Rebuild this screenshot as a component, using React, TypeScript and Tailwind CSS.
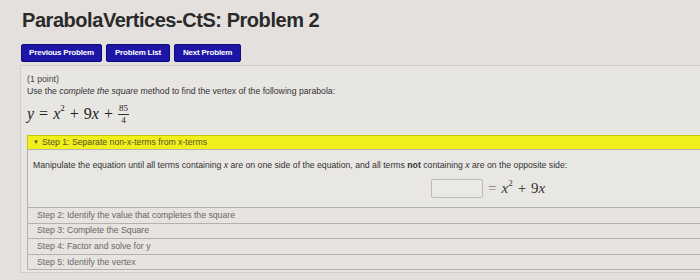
import React from "react";

const sans = { fontFamily: '"Liberation Sans", Arial, sans-serif' };
const serif = { fontFamily: '"Liberation Serif", "Times New Roman", serif' };

function Btn({ label, w }: { label: string; w: string }) {
  return (
    <div
      className={`h-[18px] ${w} flex items-center justify-center rounded-[2px] border border-[#0e0a7a] bg-[#1d15a6] text-[8px] font-bold tracking-[-0.2px] text-white`}
    >
      {label}
    </div>
  );
}

function StepRow({ label }: { label: string }) {
  return (
    <div className="h-[16.6px] -mt-px flex items-center border border-[#b3b0ad] bg-[#e6e3e0] pl-[9px] text-[8.7px] text-[#6a6866]">
      {label}
    </div>
  );
}

export default function App() {
  return (
    <div
      className="w-[700px] h-[280px] overflow-hidden bg-[#e3e0dd] text-[#333]"
      style={sans}
    >
      <div className="pl-[22px] pt-[8px]">
        <div className="h-[24px] text-[20px] leading-[24px] font-bold tracking-[-0.45px] text-[#2b2a2a]">
          ParabolaVertices-CtS: Problem 2
        </div>
      </div>
      <div className="pl-[21px] pt-[12px] flex gap-[4px]">
        <Btn label="Previous Problem" w="w-[81px]" />
        <Btn label="Problem List" w="w-[64px]" />
        <Btn label="Next Problem" w="w-[67px]" />
      </div>
      <div className="ml-[20px] mt-[3px] w-[700px] h-[208px] border border-[#d2cfcc] bg-[#e8e6e3] pl-[6px] pt-[7px]">
        <div className="text-[8.7px] leading-[12px] text-[#444]">(1 point)</div>
        <div className="text-[8.7px] leading-[12px] text-[#333]">
          Use the <i>complete the square</i> method to find the vertex of the following parabola:
        </div>
        <div className="mt-[6px] h-[22px] flex items-center text-[#222]" style={serif}>
          <span className="text-[16px] italic">y</span>
          <span className="text-[16px] mx-[5px]">=</span>
          <span className="text-[16px] italic">x</span>
          <span className="text-[9px] -mt-[10px]">2</span>
          <span className="text-[16px] mx-[5px]">+</span>
          <span className="text-[16px]">9</span>
          <span className="text-[16px] italic">x</span>
          <span className="text-[16px] mx-[5px]">+</span>
          <span className="flex flex-col items-center text-[9px] leading-[9px]">
            <span>85</span>
            <span className="w-[11px] h-px bg-[#333] my-[1px]"></span>
            <span>4</span>
          </span>
        </div>
        <div className="mt-[10px] h-[15px] flex items-center border border-[#c9c400] bg-[#f1ef1c] pl-[5px] text-[8.7px] text-[#55542a]">
          <span className="text-[6px] mr-[3px]">▼</span>
          Step 1: Separate non-x-terms from x-terms
        </div>
        <div className="-mt-px h-[59px] border border-[#b3b0ad] bg-[#e9e7e4] pl-[5px] pt-[9px]">
          <div className="text-[8.7px] leading-[12px] text-[#333]">
            Manipulate the equation until all terms containing <i>x</i> are on one side of the equation, and all terms{" "}
            <b>not</b> containing <i>x</i> are on the opposite side:
          </div>
          <div className="pl-[398px] mt-[6px] flex items-center text-[#333]" style={serif}>
            <div className="w-[52px] h-[19px] rounded-[2px] border border-[#bdbab7] bg-[#ebe9e6]"></div>
            <span className="text-[15px] ml-[5px] text-[#777]">=</span>
            <span className="text-[15px] ml-[5px] italic">x</span>
            <span className="text-[9px] -mt-[9px]">2</span>
            <span className="text-[15px] mx-[5px]">+</span>
            <span className="text-[15px]">9</span>
            <span className="text-[15px] italic">x</span>
          </div>
        </div>
        <div>
          <StepRow label="Step 2: Identify the value that completes the square" />
          <StepRow label="Step 3: Complete the Square" />
          <StepRow label="Step 4: Factor and solve for y" />
          <StepRow label="Step 5: Identify the vertex" />
        </div>
      </div>
    </div>
  );
}
